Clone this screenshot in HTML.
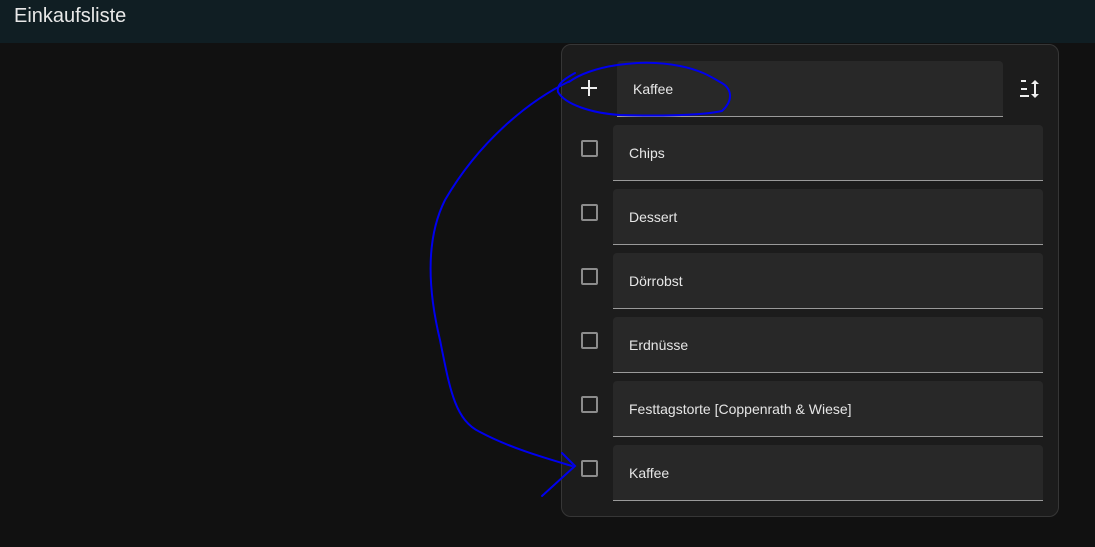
<!DOCTYPE html>
<html><head><style>
body{margin:0;width:1095px;height:547px;background:#111111;font-family:"Liberation Sans",sans-serif;position:relative;overflow:hidden}
.hdr{position:absolute;left:0;top:0;width:1095px;height:43px;background:#101e23}
.hdr span{position:absolute;left:14px;top:5px;font-size:20px;color:#e8e8e8}
.card{position:absolute;left:561px;top:44px;width:498px;height:473px;background:#1c1c1c;border:1px solid #363636;border-radius:10px;box-sizing:border-box}
.f{position:absolute;background:#282828;border-bottom:1px solid #9a9a9a;border-radius:4px 4px 0 0;box-sizing:border-box;color:#e6e6e6;font-size:14px}
.f span{position:absolute;left:16px;top:20px}
.cb{position:absolute;left:581px;width:13px;height:13px;border:2px solid #8c8c8c;border-radius:2px}
</style></head><body>
<div class="hdr"><span>Einkaufsliste</span></div>
<div class="card"></div>
<div style="position:absolute;left:581px;top:87px;width:16px;height:2px;background:#eee"></div>
<div style="position:absolute;left:588px;top:80px;width:2px;height:16px;background:#eee"></div>
<div class="f" style="left:617px;top:61px;width:386px;height:56px"><span>Kaffee</span></div>
<svg style="position:absolute;left:1019px;top:79px" width="24" height="20" viewBox="0 0 24 20"><g fill="#eee"><rect x="2" y="1" width="5" height="2"/><rect x="2" y="9" width="6" height="2"/><rect x="1" y="16" width="9" height="2"/><rect x="15" y="3" width="2" height="14"/><path d="M12 5h8l-4-4z M12 15h8l-4 4z"/></g></svg>
<div class="f" style="left:613px;top:125px;width:430px;height:56px"><span>Chips</span></div>
<div class="f" style="left:613px;top:189px;width:430px;height:56px"><span>Dessert</span></div>
<div class="f" style="left:613px;top:253px;width:430px;height:56px"><span>Dörrobst</span></div>
<div class="f" style="left:613px;top:317px;width:430px;height:56px"><span>Erdnüsse</span></div>
<div class="f" style="left:613px;top:381px;width:430px;height:56px"><span>Festtagstorte [Coppenrath &amp; Wiese]</span></div>
<div class="f" style="left:613px;top:445px;width:430px;height:56px"><span>Kaffee</span></div>
<div class="cb" style="top:140px"></div>
<div class="cb" style="top:204px"></div>
<div class="cb" style="top:268px"></div>
<div class="cb" style="top:332px"></div>
<div class="cb" style="top:396px"></div>
<div class="cb" style="top:460px"></div>
<svg style="position:absolute;left:0;top:0" width="1095" height="547"><g fill="none" stroke="#0000ee" stroke-width="2" stroke-linecap="round">
<path d="M569 82C590 66 640 58 680 66C700 70 710 76 720 82C732 88 734 100 722 111C700 116 650 116 620 115C590 113 565 104 558 92C556 84 566 78 575 73"/>
<path d="M570 81C530 100 480 140 445 200C425 240 428 290 440 340C450 390 455 420 480 432C510 448 545 458 572 466"/>
<path d="M562 453L575 466L542 496"/>
</g></svg>
</body></html>
